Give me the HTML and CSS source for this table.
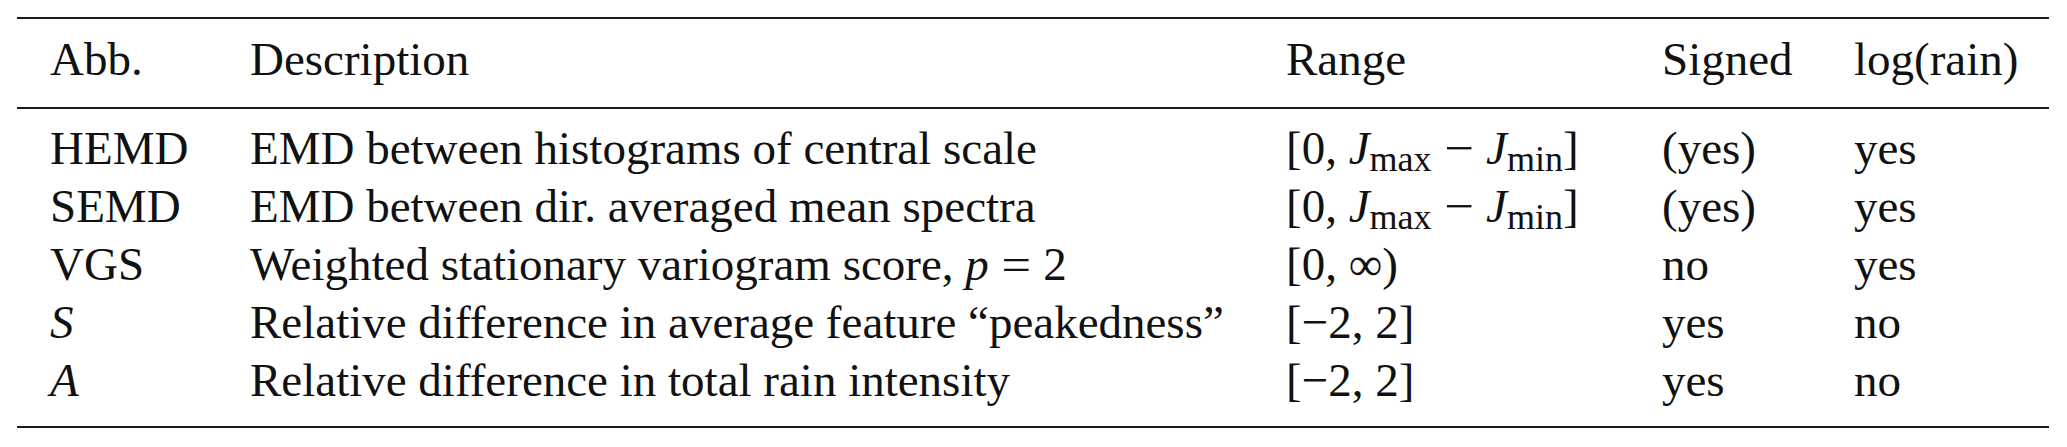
FILE: index.html
```html
<!DOCTYPE html>
<html>
<head>
<meta charset="utf-8">
<link rel="stylesheet" href="styles.css">
</head>
<body>
<table class="tbl">
  <colgroup>
    <col class="c-abb"><col class="c-desc"><col class="c-range"><col class="c-signed"><col class="c-log">
  </colgroup>
  <thead>
    <tr>
      <th class="first">Abb.</th>
      <th>Description</th>
      <th>Range</th>
      <th>Signed</th>
      <th>log(rain)</th>
    </tr>
  </thead>
  <tbody>
    <tr class="r-first">
      <td class="first">HEMD</td>
      <td>EMD between histograms of central scale</td>
      <td>[0, <i>J</i><sub class="sb">max</sub><span class="op">−</span><i>J</i><sub class="sb">min</sub>]</td>
      <td>(yes)</td>
      <td>yes</td>
    </tr>
    <tr>
      <td class="first">SEMD</td>
      <td>EMD between dir. averaged mean spectra</td>
      <td>[0, <i>J</i><sub class="sb">max</sub><span class="op">−</span><i>J</i><sub class="sb">min</sub>]</td>
      <td>(yes)</td>
      <td>yes</td>
    </tr>
    <tr>
      <td class="first">VGS</td>
      <td>Weighted stationary variogram score, <i>p</i><span class="op">=</span>2</td>
      <td>[0, ∞)</td>
      <td>no</td>
      <td>yes</td>
    </tr>
    <tr>
      <td class="first"><i>S</i></td>
      <td>Relative difference in average feature “peakedness”</td>
      <td>[−2, 2]</td>
      <td>yes</td>
      <td>no</td>
    </tr>
    <tr class="r-last">
      <td class="first"><i>A</i></td>
      <td>Relative difference in total rain intensity</td>
      <td>[−2, 2]</td>
      <td>yes</td>
      <td>no</td>
    </tr>
  </tbody>
</table>
</body>
</html>
```

FILE: styles.css
```css
html, body {
  margin: 0;
  padding: 0;
  background: #ffffff;
}

body {
  padding: 17px 0 0 17px;
}

.tbl {
  width: 2032px;
  table-layout: fixed;
  border-collapse: separate;
  border-spacing: 0;
  font-family: "Liberation Serif", "Times New Roman", serif;
  font-size: 47px;
  line-height: 58px;
  color: #111111;
}

.c-abb { width: 233px; }
.c-desc { width: 1036px; }
.c-range { width: 376px; }
.c-signed { width: 192px; }
.c-log { width: 195px; }

.tbl th,
.tbl td {
  padding: 0;
  text-align: left;
  font-weight: normal;
  white-space: nowrap;
  vertical-align: baseline;
}

.tbl th {
  padding-top: 11px;
  padding-bottom: 19px;
  border-top: 2px solid #1a1a1a;
  border-bottom: 2px solid #1a1a1a;
}

.tbl .first {
  padding-left: 33px;
}

.r-first td {
  padding-top: 10px;
}

.r-last td {
  padding-bottom: 17px;
  border-bottom: 2px solid #1a1a1a;
}

.sb {
  font-size: 36px;
  line-height: 0;
  vertical-align: -7px;
}

.op {
  display: inline-block;
  margin: 0 14px;
  transform: scaleX(1.12);
}
```
